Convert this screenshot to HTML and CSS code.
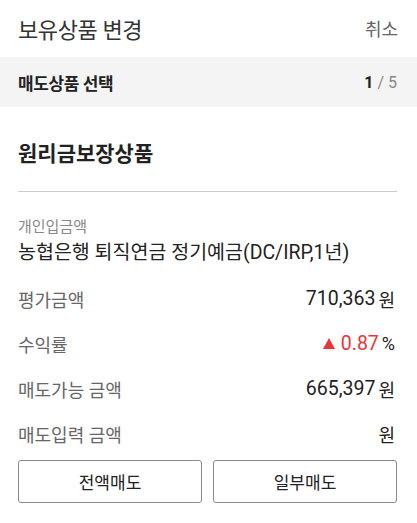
FILE: index.html
```html
<!DOCTYPE html>
<html lang="ko">
<head>
<meta charset="utf-8">
<link rel="stylesheet" href="styles.css">
</head>
<body>
<div class="page">
  <header class="top">
    <h1 class="title">보유상품 변경</h1>
    <span class="cancel">취소</span>
  </header>
  <div class="band">
    <span class="band-label">매도상품 선택</span>
    <span class="pager"><b>1</b> / 5</span>
  </div>
  <section class="content">
    <h2 class="cat">원리금보장상품</h2>
    <div class="divider"></div>
    <div class="sub">개인입금액</div>
    <div class="prod">농협은행 퇴직연금 정기예금(DC/IRP,1년)</div>
    <div class="rows">
      <div class="row"><span class="lbl">평가금액</span><span class="val">710,363<span class="unit">원</span></span></div>
      <div class="row"><span class="lbl">수익률</span><span class="val"><span class="up"><span class="tri"></span>0.87</span><span class="unit">%</span></span></div>
      <div class="row"><span class="lbl">매도가능 금액</span><span class="val">665,397<span class="unit">원</span></span></div>
      <div class="row"><span class="lbl">매도입력 금액</span><span class="val"><span class="unit">원</span></span></div>
    </div>
    <div class="btns">
      <button class="btn">전액매도</button>
      <button class="btn">일부매도</button>
    </div>
  </section>
</div>
</body>
</html>
```
FILE: styles.css
```css
* { box-sizing: border-box; }
html, body { margin: 0; padding: 0; background: #fff; }
body {
  font-family: Roboto, "Noto Sans CJK KR", sans-serif;
  color: #222;
}
.page { width: 417px; }
.top {
  height: 57px;
  display: flex;
  align-items: center;
  justify-content: space-between;
  padding: 0 19px 2px 18px;
}
.title { margin: 0; font-size: 22px; font-weight: 400; color: #333; letter-spacing: -0.4px; }
.cancel { font-size: 18px; color: #666; }
.band {
  height: 50px;
  background: #f4f4f4;
  display: flex;
  align-items: center;
  justify-content: space-between;
  padding: 0 20px 0 18px;
}
.band-label { font-size: 17px; font-weight: 700; color: #222; letter-spacing: -0.4px; }
.pager { font-size: 16px; color: #888; }
.pager b { color: #222; font-weight: 700; }
.content { padding: 0 20px 0 18px; }
.cat { margin: 0; padding-top: 34px; height: 84px; font-size: 21px; font-weight: 700; color: #222; line-height: 27px; }
.divider { height: 1px; background: #ccc; }
.sub { margin-top: 24px; font-size: 15px; color: #888; line-height: 22px; }
.prod { margin-top: 2px; font-size: 19.5px; color: #222; line-height: 26px; }
.rows { margin-top: 10px; }
.row {
  height: 45px;
  display: flex;
  align-items: center;
  justify-content: space-between;
  font-size: 18px;
  padding-right: 2px;
}
.lbl { color: #666; }
.val { color: #222; display: flex; align-items: center; font-size: 19.5px; }
.unit { margin-left: 3px; font-size: 18px; }
.up { color: #e8363b; display: flex; align-items: center; }
.tri {
  width: 0; height: 0;
  border-left: 6px solid transparent;
  border-right: 6px solid transparent;
  border-bottom: 11px solid #e8363b;
  margin-right: 6px;
}
.btns { display: flex; gap: 11px; margin-top: 4px; }
.btn {
  flex: 1;
  height: 43px;
  background: #fff;
  border: 1px solid #8a8a8a;
  border-radius: 3px;
  font-family: inherit;
  font-size: 17px;
  color: #222;
}
```
